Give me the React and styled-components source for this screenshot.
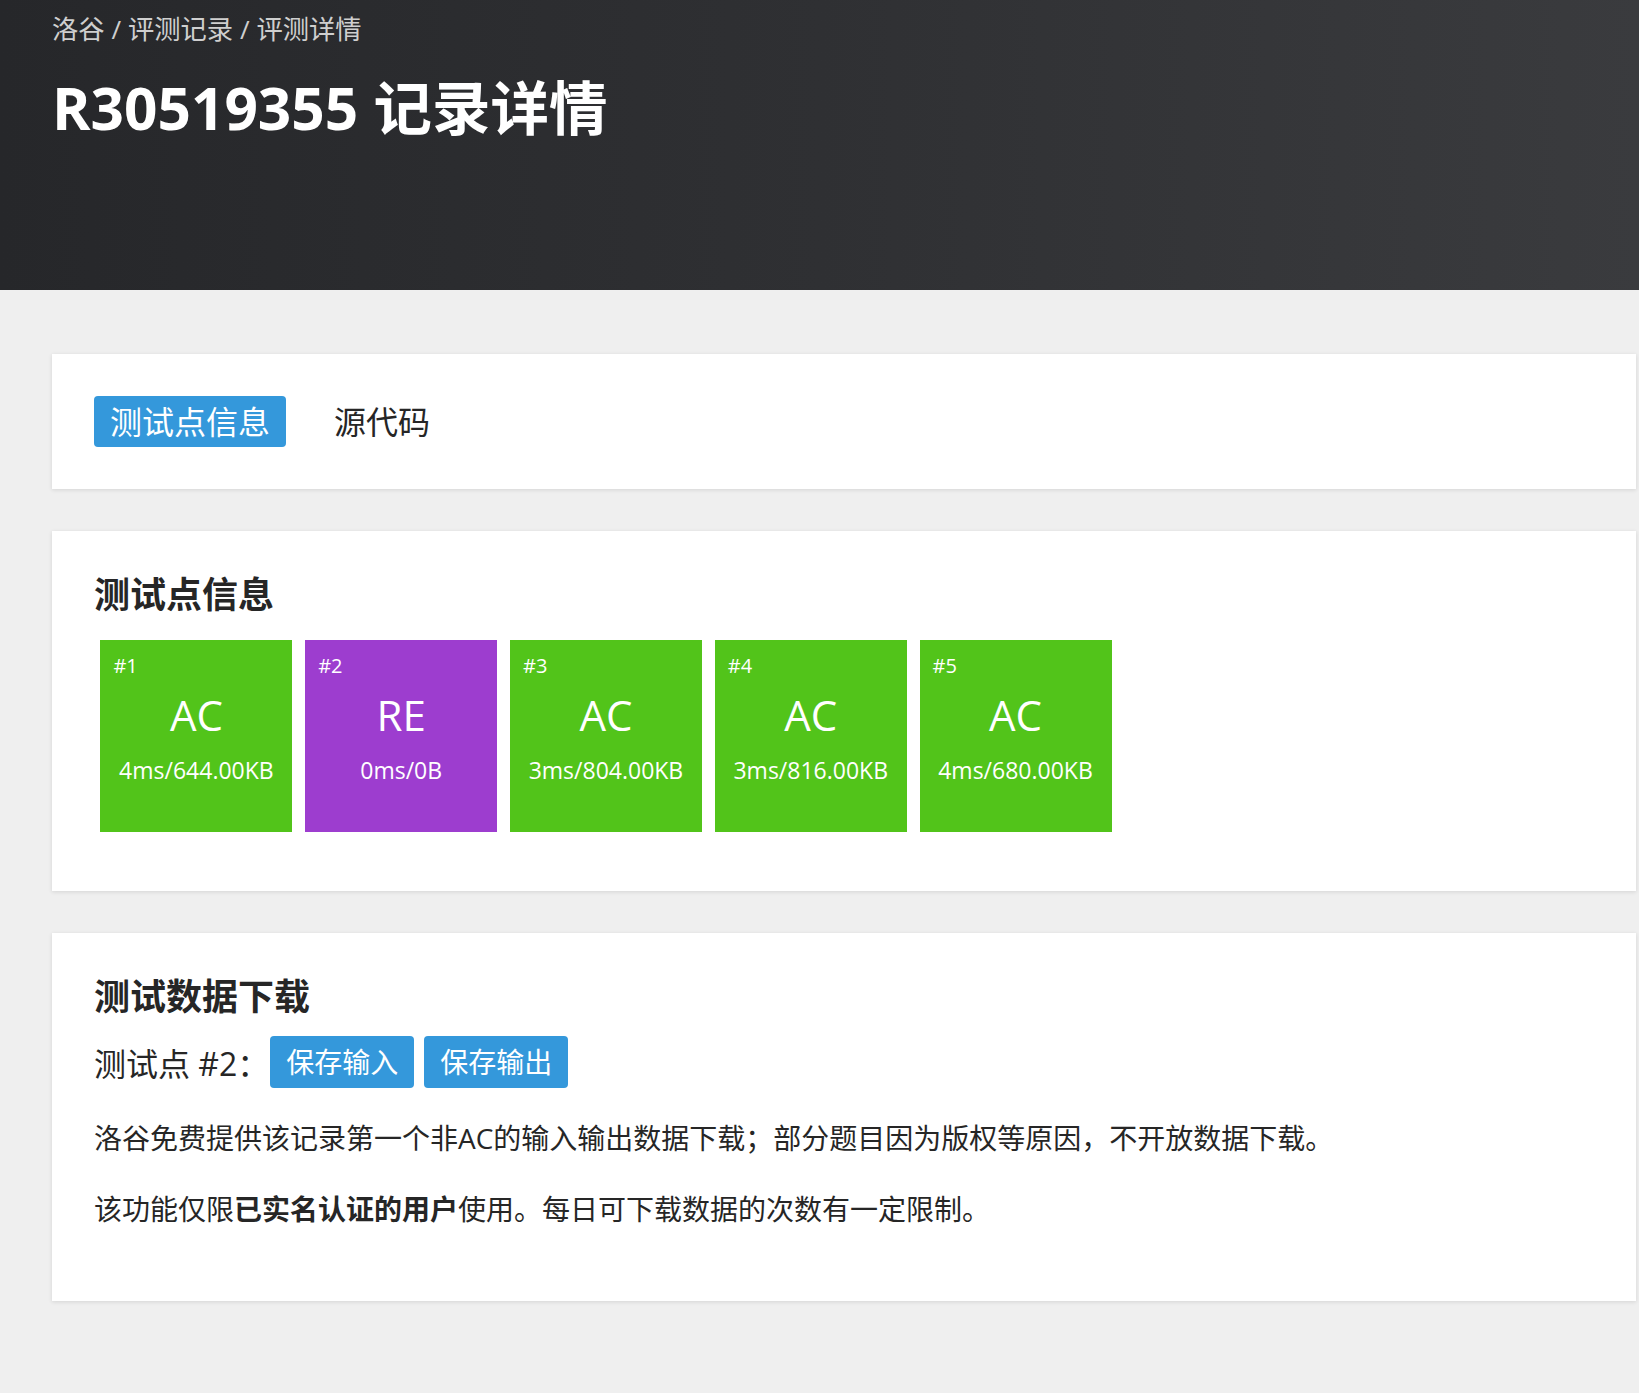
import React from "react";
import styled, { createGlobalStyle } from "styled-components";

const GlobalStyle = createGlobalStyle`
  html, body {
    margin: 0;
    padding: 0;
    background: #efefef;
    font-family: "Open Sans", "Noto Sans CJK SC", sans-serif;
    color: #262626;
  }
`;

const Header = styled.header`
  height: 290px;
  box-sizing: border-box;
  padding: 10px 0 0 52px;
  background: linear-gradient(90deg, #26272a 0%, #2f3033 50%, #3a3b3e 100%);
`;

const Breadcrumb = styled.div`
  font-size: 26.3px;
  line-height: 39px;
  color: #cfcfcf;
`;

const Title = styled.h1`
  margin: 24px 0 0;
  font-size: 58.5px;
  line-height: 68px;
  font-weight: 700;
  color: #fff;
`;

const Main = styled.main`
  padding: 64px 3px 90px 52px;
  display: flex;
  flex-direction: column;
  gap: 42px;
`;

const Card = styled.section`
  background: #fff;
  padding: 42px;
  box-shadow: 0 1px 4px rgba(26, 26, 26, 0.12);
`;

const Tabs = styled.div`
  display: flex;
  gap: 32px;
`;

const Tab = styled.div`
  height: 51px;
  line-height: 51px;
  padding: 0 16px;
  font-size: 32px;
  border-radius: 4px;
  background: ${(p) => (p.$active ? "#3498db" : "transparent")};
  color: ${(p) => (p.$active ? "#fff" : "#262626")};
`;

const CardTitle = styled.h2`
  margin: 0;
  font-size: 36px;
  line-height: 43px;
  font-weight: 700;
`;

const CaseWrap = styled.div`
  display: flex;
  flex-wrap: wrap;
  margin: 18px 0 10px;
`;

const CaseBox = styled.div`
  width: 192px;
  height: 192px;
  margin: 6.4px;
  background: ${(p) => p.$color};
  color: #fff;
  display: flex;
  flex-direction: column;
  align-items: center;
`;

const CaseId = styled.div`
  align-self: flex-start;
  padding-left: 13px;
  margin-top: 14px;
  font-size: 20px;
  line-height: 24px;
`;

const CaseStatus = styled.div`
  margin-top: 12px;
  font-size: 42px;
  line-height: 50px;
`;

const CaseTime = styled.div`
  margin-top: 15px;
  font-size: 23px;
  line-height: 30px;
`;

const DownloadRow = styled.div`
  display: flex;
  align-items: center;
  margin-top: 18px;
  height: 52px;
`;

const RowLabel = styled.span`
  font-size: 32px;
  margin-right: 1px;
`;

const Button = styled.button`
  height: 52px;
  padding: 0 16px;
  margin-right: 10px;
  border: none;
  border-radius: 4px;
  background: #3498db;
  color: #fff;
  font-family: inherit;
  font-size: 28px;
  line-height: 52px;
`;

const Para = styled.p`
  margin: 29px 0 28px;
  font-size: 28px;
  line-height: 43px;
  & + & {
    margin-top: 27px;
  }
`;

const cases = [
  { id: 1, status: "AC", time: "4ms/644.00KB" },
  { id: 2, status: "RE", time: "0ms/0B" },
  { id: 3, status: "AC", time: "3ms/804.00KB" },
  { id: 4, status: "AC", time: "3ms/816.00KB" },
  { id: 5, status: "AC", time: "4ms/680.00KB" },
];

const statusColor = { AC: "#52c41a", RE: "#9d3dcf" };

export default function App() {
  return (
    <>
      <GlobalStyle />
      <Header>
        <Breadcrumb>洛谷 / 评测记录 / 评测详情</Breadcrumb>
        <Title>R30519355 记录详情</Title>
      </Header>
      <Main>
        <Card>
          <Tabs>
            <Tab $active>测试点信息</Tab>
            <Tab>源代码</Tab>
          </Tabs>
        </Card>
        <Card>
          <CardTitle>测试点信息</CardTitle>
          <CaseWrap>
            {cases.map((c) => (
              <CaseBox key={c.id} $color={statusColor[c.status]}>
                <CaseId>#{c.id}</CaseId>
                <CaseStatus>{c.status}</CaseStatus>
                <CaseTime>{c.time}</CaseTime>
              </CaseBox>
            ))}
          </CaseWrap>
        </Card>
        <Card>
          <CardTitle>测试数据下载</CardTitle>
          <DownloadRow>
            <RowLabel>测试点 #2：</RowLabel>
            <Button>保存输入</Button>
            <Button>保存输出</Button>
          </DownloadRow>
          <Para>洛谷免费提供该记录第一个非AC的输入输出数据下载；部分题目因为版权等原因，不开放数据下载。</Para>
          <Para>
            该功能仅限<b>已实名认证的用户</b>使用。每日可下载数据的次数有一定限制。
          </Para>
        </Card>
      </Main>
    </>
  );
}
